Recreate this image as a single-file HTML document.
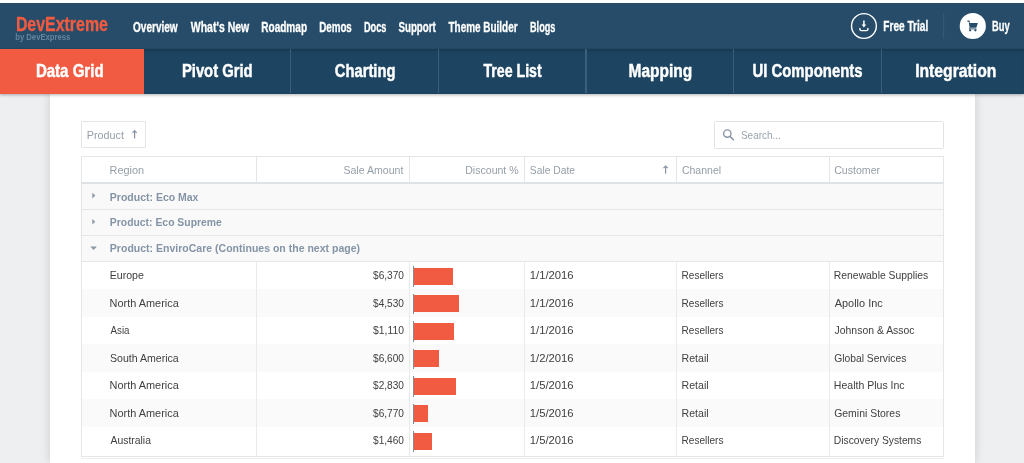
<!DOCTYPE html>
<html><head><meta charset="utf-8"><title>DevExtreme Data Grid</title>
<style>
html,body{margin:0;padding:0;}
body{width:1024px;height:463px;overflow:hidden;position:relative;background:#edeff1;font-family:"Liberation Sans", sans-serif;}
.t{position:absolute;white-space:pre;line-height:1;transform-origin:0 0;display:block;}
.abs{position:absolute;}
</style></head><body>
<!-- page -->
<div class="abs" style="left:50px;top:93px;width:925px;height:370px;background:#fff;box-shadow:0 0 10px rgba(0,0,0,.14)"></div>
<!-- header -->
<div class="abs" style="left:0;top:0;width:1024px;height:3px;background:#fff"></div>
<div class="abs" style="left:0;top:3px;width:1024px;height:46px;background:#264c69"></div>
<div class="abs" style="left:0;top:49px;width:1024px;height:44.5px;background:#1d4562;box-shadow:0 1px 3px rgba(0,0,0,.3), inset 0 4px 4px -3px rgba(0,0,0,.28)"></div>
<div class="abs" style="left:0;top:49px;width:144px;height:44.5px;background:#f05b41"></div>
<div style="position:absolute;left:289.8px;top:49px;width:1.2px;height:44px;background:#3a5f7d"></div><div style="position:absolute;left:437.6px;top:49px;width:1.2px;height:44px;background:#3a5f7d"></div><div style="position:absolute;left:585.4px;top:49px;width:1.2px;height:44px;background:#3a5f7d"></div><div style="position:absolute;left:733.1px;top:49px;width:1.2px;height:44px;background:#3a5f7d"></div><div style="position:absolute;left:880.9px;top:49px;width:1.2px;height:44px;background:#3a5f7d"></div>
<!-- header icons -->
<svg class="abs" style="left:848px;top:11px" width="170" height="30" viewBox="848 11 170 30">
 <circle cx="863.95" cy="26" r="12.4" fill="none" stroke="#fff" stroke-width="1.4"/>
 <path d="M863.9 20.4v5" fill="none" stroke="#fff" stroke-width="1.5"/>
 <path d="M861.6 24.6h4.6l-2.3 3z" fill="#fff"/>
 <path d="M859.9 28v1.2q0 1.4 1.4 1.4h5.2q1.4 0 1.4-1.4v-1.2" fill="none" stroke="#fff" stroke-width="1.4"/>
 <rect x="943.2" y="13.5" width="1" height="25" fill="#375a78"/>
 <circle cx="972.8" cy="26" r="13.1" fill="#fff"/>
 <path d="M967.4 21.1h1.6l0.5 1.6" fill="none" stroke="#264c69" stroke-width="1.1" stroke-linejoin="round"/>
 <path d="M968.9 23h9l-1.6 4.7h-6.7z" fill="#264c69"/>
 <path d="M969.6 27.7v1.2h6.9" fill="none" stroke="#264c69" stroke-width="0.9"/>
 <circle cx="970.1" cy="30.3" r="1.15" fill="#264c69"/><circle cx="975.4" cy="30.3" r="1.15" fill="#264c69"/>
</svg>
<!-- toolbar -->
<div class="abs" style="left:81.2px;top:121.2px;width:62.9px;height:24.6px;border:1px solid #e3e5e7;border-radius:1px;background:#fff;box-sizing:content-box"></div>
<div class="abs" style="left:714.3px;top:121.2px;width:228px;height:25.4px;border:1px solid #e1e3e5;border-radius:1.5px;background:#fff"></div>
<svg class="abs" style="left:720px;top:127px" width="18" height="16" viewBox="720 127 18 16">
 <circle cx="727.3" cy="133.6" r="3.7" fill="none" stroke="#8995a3" stroke-width="1.4"/>
 <path d="M730.1 136.5l3.3 3.3" stroke="#8995a3" stroke-width="1.6" stroke-linecap="round"/>
</svg>
<svg class="abs" style="left:130px;top:128px" width="10" height="12" viewBox="130 128 10 12">
 <path d="M134.6 130.6v7.9M132.5 132.8l2.1-2.2 2.1 2.2" fill="none" stroke="#8995a3" stroke-width="1.2"/>
</svg>
<!-- grid -->
<div class="abs" style="left:81px;top:156px;width:861.3px;height:298.5px;border:1px solid #e4e6e8;background:#fff"></div>
<div class="abs" style="left:82px;top:182px;width:861.3px;height:1.5px;background:#dfe2e4"></div>
<div class="abs" style="left:82px;top:183.5px;width:861.3px;height:78px;background:#f9f9f9"></div>
<div class="abs" style="left:82px;top:209px;width:861.3px;height:1px;background:#e4e6e8"></div>
<div class="abs" style="left:82px;top:235.3px;width:861.3px;height:1px;background:#e4e6e8"></div>
<div class="abs" style="left:82px;top:261px;width:861.3px;height:1px;background:#e4e6e8"></div>
<div class="abs" style="left:81px;top:457.6px;width:863.3px;height:1px;background:#eceeef"></div>
<div style="position:absolute;left:82px;top:289.0px;width:861.3px;height:27.5px;background:#fafafa"></div>
<div style="position:absolute;left:82px;top:344.0px;width:861.3px;height:27.5px;background:#fafafa"></div>
<div style="position:absolute;left:82px;top:399.0px;width:861.3px;height:27.5px;background:#fafafa"></div>

<div style="position:absolute;left:256.3px;top:156.5px;width:1px;height:26px;background:#e3e5e7"></div><div style="position:absolute;left:256.3px;top:261.5px;width:1px;height:194px;background:#e8eaeb"></div><div style="position:absolute;left:408.9px;top:156.5px;width:1px;height:26px;background:#e3e5e7"></div><div style="position:absolute;left:408.9px;top:261.5px;width:1px;height:194px;background:#e8eaeb"></div><div style="position:absolute;left:524.1px;top:156.5px;width:1px;height:26px;background:#e3e5e7"></div><div style="position:absolute;left:524.1px;top:261.5px;width:1px;height:194px;background:#e8eaeb"></div><div style="position:absolute;left:675.8px;top:156.5px;width:1px;height:26px;background:#e3e5e7"></div><div style="position:absolute;left:675.8px;top:261.5px;width:1px;height:194px;background:#e8eaeb"></div><div style="position:absolute;left:828.7px;top:156.5px;width:1px;height:26px;background:#e3e5e7"></div><div style="position:absolute;left:828.7px;top:261.5px;width:1px;height:194px;background:#e8eaeb"></div>
<div style="position:absolute;left:413.3px;top:266.3px;width:1.1px;height:20.3px;background:#8a8a8a"></div><div style="position:absolute;left:414.4px;top:267.9px;width:38.9px;height:17px;background:#f05b41"></div>
<div style="position:absolute;left:413.3px;top:293.8px;width:1.1px;height:20.3px;background:#8a8a8a"></div><div style="position:absolute;left:414.4px;top:295.4px;width:44.6px;height:17px;background:#f05b41"></div>
<div style="position:absolute;left:413.3px;top:321.3px;width:1.1px;height:20.3px;background:#8a8a8a"></div><div style="position:absolute;left:414.4px;top:322.9px;width:39.6px;height:17px;background:#f05b41"></div>
<div style="position:absolute;left:413.3px;top:348.8px;width:1.1px;height:20.3px;background:#8a8a8a"></div><div style="position:absolute;left:414.4px;top:350.4px;width:24.5px;height:17px;background:#f05b41"></div>
<div style="position:absolute;left:413.3px;top:376.3px;width:1.1px;height:20.3px;background:#8a8a8a"></div><div style="position:absolute;left:414.4px;top:377.9px;width:41.4px;height:17px;background:#f05b41"></div>
<div style="position:absolute;left:413.3px;top:403.8px;width:1.1px;height:20.3px;background:#8a8a8a"></div><div style="position:absolute;left:414.4px;top:405.4px;width:13.7px;height:17px;background:#f05b41"></div>
<div style="position:absolute;left:413.3px;top:431.3px;width:1.1px;height:20.3px;background:#8a8a8a"></div><div style="position:absolute;left:414.4px;top:432.9px;width:17.6px;height:17px;background:#f05b41"></div>

<svg class="abs" style="left:660px;top:163px" width="12" height="13" viewBox="660 163 12 13">
 <path d="M665.6 166v7.8M663.5 168.2l2.1-2.2 2.1 2.2" fill="none" stroke="#8995a3" stroke-width="1.2"/>
</svg>
<!-- group arrows -->
<svg class="abs" style="left:88px;top:188px" width="12" height="68" viewBox="88 188 12 68">
 <path d="M92.3 192.8l3 2.8-3 2.8z" fill="#8c98a6"/>
 <path d="M92.3 219l3 2.8-3 2.8z" fill="#8c98a6"/>
 <path d="M90.3 246.6h6.6l-3.3 3.3z" fill="#8c98a6"/>
</svg>
<svg class="abs" style="left:0;top:0;will-change:transform" width="1024" height="463" viewBox="0 0 1024 463" font-family="Liberation Sans, sans-serif" xml:space="preserve">
<text transform="translate(15.88 31.10) scale(0.7581 1)" font-size="21.0" font-weight="700" fill="#f05b41" stroke="#f05b41" stroke-width="0.35">DevExtreme</text>
<text transform="translate(15.20 40.40) scale(0.8384 1)" font-size="9.2" font-weight="700" fill="#67849e">by DevExpress</text>
<text transform="translate(133.04 31.50) scale(0.7176 1)" font-size="14" font-weight="700" fill="#fff" stroke="#fff" stroke-width="0.3">Overview</text>
<text transform="translate(190.75 31.50) scale(0.7508 1)" font-size="14" font-weight="700" fill="#fff" stroke="#fff" stroke-width="0.3">What&#x27;s New</text>
<text transform="translate(261.22 31.50) scale(0.7189 1)" font-size="14" font-weight="700" fill="#fff" stroke="#fff" stroke-width="0.3">Roadmap</text>
<text transform="translate(319.14 31.50) scale(0.7007 1)" font-size="14" font-weight="700" fill="#fff" stroke="#fff" stroke-width="0.3">Demos</text>
<text transform="translate(363.98 31.50) scale(0.6556 1)" font-size="14" font-weight="700" fill="#fff" stroke="#fff" stroke-width="0.3">Docs</text>
<text transform="translate(398.40 31.50) scale(0.6989 1)" font-size="14" font-weight="700" fill="#fff" stroke="#fff" stroke-width="0.3">Support</text>
<text transform="translate(448.55 31.50) scale(0.7110 1)" font-size="14" font-weight="700" fill="#fff" stroke="#fff" stroke-width="0.3">Theme Builder</text>
<text transform="translate(529.98 31.50) scale(0.6543 1)" font-size="14" font-weight="700" fill="#fff" stroke="#fff" stroke-width="0.3">Blogs</text>
<text transform="translate(883.32 31.10) scale(0.7233 1)" font-size="14" font-weight="700" fill="#fff" stroke="#fff" stroke-width="0.3">Free Trial</text>
<text transform="translate(992.07 31.10) scale(0.6664 1)" font-size="14" font-weight="700" fill="#fff" stroke="#fff" stroke-width="0.3">Buy</text>
<text transform="translate(35.88 77.20) scale(0.8271 1)" font-size="18.2" font-weight="700" fill="#fff" stroke="#fff" stroke-width="0.45">Data Grid</text>
<text transform="translate(181.90 77.20) scale(0.8132 1)" font-size="18.2" font-weight="700" fill="#fff" stroke="#fff" stroke-width="0.45">Pivot Grid</text>
<text transform="translate(334.86 77.20) scale(0.8107 1)" font-size="18.2" font-weight="700" fill="#fff" stroke="#fff" stroke-width="0.45">Charting</text>
<text transform="translate(483.43 77.20) scale(0.7791 1)" font-size="18.2" font-weight="700" fill="#fff" stroke="#fff" stroke-width="0.45">Tree List</text>
<text transform="translate(628.56 77.20) scale(0.8516 1)" font-size="18.2" font-weight="700" fill="#fff" stroke="#fff" stroke-width="0.45">Mapping</text>
<text transform="translate(752.43 77.20) scale(0.8199 1)" font-size="18.2" font-weight="700" fill="#fff" stroke="#fff" stroke-width="0.45">UI Components</text>
<text transform="translate(915.14 77.20) scale(0.8646 1)" font-size="18.2" font-weight="700" fill="#fff" stroke="#fff" stroke-width="0.45">Integration</text>
<text transform="translate(86.73 138.50) scale(0.9645 1)" font-size="11.2" font-weight="400" fill="#959ea8">Product</text>
<text transform="translate(740.95 138.70) scale(0.8912 1)" font-size="11.2" font-weight="400" fill="#9aa3ad">Search...</text>
<text transform="translate(109.62 174.20) scale(0.9731 1)" font-size="11.2" font-weight="400" fill="#959ea8">Region</text>
<text transform="translate(343.43 174.20) scale(0.9455 1)" font-size="11.2" font-weight="400" fill="#959ea8">Sale Amount</text>
<text transform="translate(465.25 174.20) scale(0.9425 1)" font-size="11.2" font-weight="400" fill="#959ea8">Discount %</text>
<text transform="translate(529.84 174.20) scale(0.9210 1)" font-size="11.2" font-weight="400" fill="#959ea8">Sale Date</text>
<text transform="translate(681.88 174.20) scale(0.9423 1)" font-size="11.2" font-weight="400" fill="#959ea8">Channel</text>
<text transform="translate(834.18 174.20) scale(0.9474 1)" font-size="11.2" font-weight="400" fill="#959ea8">Customer</text>
<text transform="translate(109.84 200.80) scale(0.9380 1)" font-size="11.2" font-weight="700" fill="#8494a6">Product: Eco Max</text>
<text transform="translate(109.85 226.20) scale(0.9277 1)" font-size="11.2" font-weight="700" fill="#8494a6">Product: Eco Supreme</text>
<text transform="translate(109.84 252.30) scale(0.9404 1)" font-size="11.2" font-weight="700" fill="#8494a6">Product: EnviroCare (Continues on the next page)</text>
<text transform="translate(109.64 279.10) scale(0.9500 1)" font-size="11.2" font-weight="400" fill="#414141">Europe</text>
<text transform="translate(373.01 279.10) scale(0.9043 1)" font-size="11.2" font-weight="400" fill="#414141">$6,370</text>
<text transform="translate(529.74 279.10) scale(1.0079 1)" font-size="11.2" font-weight="400" fill="#414141">1/1/2016</text>
<text transform="translate(681.59 279.10) scale(0.8990 1)" font-size="11.2" font-weight="400" fill="#414141">Resellers</text>
<text transform="translate(833.87 279.10) scale(0.9255 1)" font-size="11.2" font-weight="400" fill="#414141">Renewable Supplies</text>
<text transform="translate(109.62 306.60) scale(0.9760 1)" font-size="11.2" font-weight="400" fill="#414141">North America</text>
<text transform="translate(373.01 306.60) scale(0.9043 1)" font-size="11.2" font-weight="400" fill="#414141">$4,530</text>
<text transform="translate(529.74 306.60) scale(1.0079 1)" font-size="11.2" font-weight="400" fill="#414141">1/1/2016</text>
<text transform="translate(681.59 306.60) scale(0.8990 1)" font-size="11.2" font-weight="400" fill="#414141">Resellers</text>
<text transform="translate(834.70 306.60) scale(0.9768 1)" font-size="11.2" font-weight="400" fill="#414141">Apollo Inc</text>
<text transform="translate(110.50 334.10) scale(0.8712 1)" font-size="11.2" font-weight="400" fill="#414141">Asia</text>
<text transform="translate(373.01 334.10) scale(0.9272 1)" font-size="11.2" font-weight="400" fill="#414141">$1,110</text>
<text transform="translate(529.74 334.10) scale(1.0079 1)" font-size="11.2" font-weight="400" fill="#414141">1/1/2016</text>
<text transform="translate(681.59 334.10) scale(0.8990 1)" font-size="11.2" font-weight="400" fill="#414141">Resellers</text>
<text transform="translate(834.56 334.10) scale(0.9322 1)" font-size="11.2" font-weight="400" fill="#414141">Johnson &amp; Assoc</text>
<text transform="translate(110.03 361.60) scale(0.9455 1)" font-size="11.2" font-weight="400" fill="#414141">South America</text>
<text transform="translate(373.01 361.60) scale(0.9043 1)" font-size="11.2" font-weight="400" fill="#414141">$6,600</text>
<text transform="translate(529.74 361.60) scale(1.0079 1)" font-size="11.2" font-weight="400" fill="#414141">1/2/2016</text>
<text transform="translate(681.55 361.60) scale(0.9483 1)" font-size="11.2" font-weight="400" fill="#414141">Retail</text>
<text transform="translate(834.19 361.60) scale(0.9202 1)" font-size="11.2" font-weight="400" fill="#414141">Global Services</text>
<text transform="translate(109.62 389.10) scale(0.9760 1)" font-size="11.2" font-weight="400" fill="#414141">North America</text>
<text transform="translate(373.01 389.10) scale(0.9043 1)" font-size="11.2" font-weight="400" fill="#414141">$2,830</text>
<text transform="translate(529.74 389.10) scale(1.0079 1)" font-size="11.2" font-weight="400" fill="#414141">1/5/2016</text>
<text transform="translate(681.55 389.10) scale(0.9483 1)" font-size="11.2" font-weight="400" fill="#414141">Retail</text>
<text transform="translate(833.85 389.10) scale(0.9410 1)" font-size="11.2" font-weight="400" fill="#414141">Health Plus Inc</text>
<text transform="translate(109.62 416.60) scale(0.9760 1)" font-size="11.2" font-weight="400" fill="#414141">North America</text>
<text transform="translate(373.01 416.60) scale(0.9043 1)" font-size="11.2" font-weight="400" fill="#414141">$6,770</text>
<text transform="translate(529.74 416.60) scale(1.0079 1)" font-size="11.2" font-weight="400" fill="#414141">1/5/2016</text>
<text transform="translate(681.55 416.60) scale(0.9483 1)" font-size="11.2" font-weight="400" fill="#414141">Retail</text>
<text transform="translate(834.19 416.60) scale(0.9328 1)" font-size="11.2" font-weight="400" fill="#414141">Gemini Stores</text>
<text transform="translate(110.50 444.10) scale(0.9290 1)" font-size="11.2" font-weight="400" fill="#414141">Australia</text>
<text transform="translate(373.01 444.10) scale(0.9043 1)" font-size="11.2" font-weight="400" fill="#414141">$1,460</text>
<text transform="translate(529.74 444.10) scale(1.0079 1)" font-size="11.2" font-weight="400" fill="#414141">1/5/2016</text>
<text transform="translate(681.59 444.10) scale(0.8990 1)" font-size="11.2" font-weight="400" fill="#414141">Resellers</text>
<text transform="translate(833.87 444.10) scale(0.9189 1)" font-size="11.2" font-weight="400" fill="#414141">Discovery Systems</text>
</svg>
</body></html>
